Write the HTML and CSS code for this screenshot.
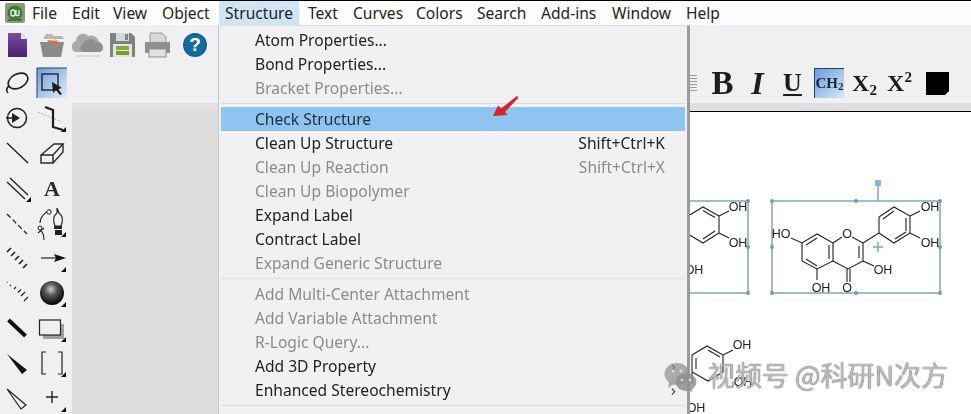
FILE: index.html
```html
<!DOCTYPE html>
<html lang="en">
<head>
<meta charset="utf-8">
<title>ChemDraw - Structure menu</title>
<link rel="stylesheet" href="styles.css">
</head>
<body>
<div class="app">
  <nav class="menubar">
    <svg class="app-icon" width="20" height="20" viewBox="0 0 20 20">
      <rect x="0" y="0" width="20" height="20" rx="2" fill="#8a9a78"/>
      <circle cx="10" cy="10" r="7.5" fill="#3c7a3e"/>
      <path d="M6 9a2 2 0 1 1 4 0v2a2 2 0 1 1-4 0zM11 7v5a2 2 0 0 0 3 0V7" fill="none" stroke="#e8f2e0" stroke-width="1.3"/>
      <rect x="3" y="16" width="14" height="2" fill="#5b6650"/>
    </svg>
    <span class="mi m-file">File</span>
    <span class="mi m-edit">Edit</span>
    <span class="mi m-view">View</span>
    <span class="mi m-object">Object</span>
    <span class="mi m-structure">Structure</span>
    <span class="mi m-text">Text</span>
    <span class="mi m-curves">Curves</span>
    <span class="mi m-colors">Colors</span>
    <span class="mi m-search">Search</span>
    <span class="mi m-addins">Add-ins</span>
    <span class="mi m-window">Window</span>
    <span class="mi m-help">Help</span>
  </nav>

  <div class="iconbar">
    <svg class="tb" width="35" height="41" viewBox="0 0 35 41"><defs><linearGradient id="doc" x1="0" y1="0" x2="0" y2="1"><stop offset="0" stop-color="#7d4f9e"/><stop offset="1" stop-color="#4a2070"/></linearGradient></defs><path d="M8 8h13l6 6v18H8z" fill="url(#doc)"/><path d="M21 8l6 6h-6z" fill="#e9e4ee"/></svg>
    <svg class="tb" width="35" height="41" viewBox="0 0 35 41"><path d="M8 14l3-5h6l2 2h8l2 3z" fill="#b9b6b4"/><path d="M5 17h24l-3 15H8z" fill="#8d8a88"/><path d="M12 15l9 1-2-3 4 4-3 5 1-4c-4 0-7 0-9-3z" fill="#e8683a"/></svg>
    <svg class="tb" width="35" height="41" viewBox="0 0 35 41"><path d="M5 27a6 6 0 0 1 1-11 7 7 0 0 1 12-5 8 8 0 0 1 11 7 5 5 0 0 1 2 9z" fill="#a9a8a8"/><path d="M13 27a5 5 0 0 1 1-9 7 7 0 0 1 12-1 5 5 0 0 1 3 10z" fill="#8f8e8e"/><rect x="6" y="30" width="24" height="2" fill="#dcdcdc"/></svg>
    <svg class="tb" width="35" height="41" viewBox="0 0 35 41"><path d="M5 8h21l4 4v20H5z" fill="#7d8282"/><rect x="11" y="8" width="13" height="8" fill="#d6d8d8"/><rect x="20" y="9" width="3" height="6" fill="#7d8282"/><rect x="8" y="19" width="19" height="13" fill="#e4e6e2"/><rect x="11" y="21" width="13" height="4" fill="#8fa83e"/><rect x="11" y="26" width="13" height="4" fill="#7f9a32"/></svg>
    <svg class="tb" width="35" height="41" viewBox="0 0 35 41"><path d="M10 8h12l4 4v6H10z" fill="#d8d8d8" stroke="#9a9a9a"/><path d="M5 17h25v11H5z" fill="#8e9090"/><rect x="9" y="24" width="17" height="8" fill="#e0e0e0" stroke="#8e9090"/></svg>
    <svg class="tb" width="40" height="41" viewBox="0 0 40 41"><circle cx="20" cy="20" r="12" fill="#146c9e"/><circle cx="20" cy="20" r="11" fill="none" stroke="#0f5c89"/><text class="help-q" x="20" y="26" text-anchor="middle">?</text></svg>
  </div>

  <div class="body">
    <aside class="tools">
      <div class="cell"><svg width="35" height="35" viewBox="0 0 35 35"><ellipse cx="18" cy="15" rx="10.5" ry="7" transform="rotate(-28 18 15)" fill="none" stroke="#222" stroke-width="1.6"/><path d="M10 20c-4 1-4 5-2 7" fill="none" stroke="#222" stroke-width="1.6"/></svg></div>
      <div class="cell"><svg width="35" height="35" viewBox="0 0 35 35"><defs><linearGradient id="sel" x1="0" y1="0" x2="1" y2="1"><stop offset="0" stop-color="#6f9cd4"/><stop offset="1" stop-color="#e4edf6"/></linearGradient></defs><rect x="2" y="2" width="30" height="30" fill="url(#sel)"/><path d="M2 32V2h30" fill="none" stroke="#1d3f7a"/><rect x="7" y="8" width="16" height="16" fill="none" stroke="#16263f" stroke-width="1.4"/><path d="M17 16l1 11 3-3 4 5 2-1-4-5 4-1z" fill="#1a1a22"/></svg></div>

      <div class="cell"><svg width="35" height="35" viewBox="0 0 35 35"><circle cx="17" cy="17" r="9.5" fill="none" stroke="#222" stroke-width="1.5"/><path d="M6 17h7" stroke="#222" stroke-width="1.5"/><path d="M12 12l8 5-8 5z" fill="#222"/></svg></div>
      <div class="cell more"><svg width="35" height="35" viewBox="0 0 35 35"><path d="M3 11l24 10" stroke="#d79aa6" stroke-dasharray="2 1.5"/><path d="M10 6l8 3v17l10 3" fill="none" stroke="#1b1b1b" stroke-width="2.2"/></svg></div>

      <div class="cell"><svg width="35" height="35" viewBox="0 0 35 35"><path d="M7 7l21 20" stroke="#222" stroke-width="1.4"/></svg></div>
      <div class="cell"><svg width="35" height="35" viewBox="0 0 35 35"><path d="M6 19h12v8H6zM6 19L19 8h9L18 19M28 8v8L18 27" fill="none" stroke="#2a2a2a" stroke-width="1.4"/></svg></div>

      <div class="cell more"><svg width="35" height="35" viewBox="0 0 35 35"><path d="M10 7l18 17M7 11l18 17" stroke="#222" stroke-width="1.3"/></svg></div>
      <div class="cell"><svg width="35" height="35" viewBox="0 0 35 35"><text class="tool-a" x="17" y="25" text-anchor="middle">A</text></svg></div>

      <div class="cell"><svg width="35" height="35" viewBox="0 0 35 35"><path d="M7 8l20 20" stroke="#222" stroke-width="1.3" stroke-dasharray="5 3"/></svg></div>
      <div class="cell more"><svg width="35" height="35" viewBox="0 0 35 35"><path d="M5 17c0-6 5-11 11-13M5 24c3 2 4 6 4 10M9 22l-6 5" fill="none" stroke="#222" stroke-width="1.1"/><circle cx="14" cy="6" r="2.2" fill="#f0eff1" stroke="#222"/><circle cx="5" cy="22" r="2" fill="#f0eff1" stroke="#222"/><path d="M22 2v5c-4 3-4 8-2 13h6c2-5 2-10-2-13z" fill="#f0eff1" stroke="#222" stroke-width="1.2"/><rect x="19" y="20" width="8" height="3" fill="#222"/><rect x="20" y="24" width="7" height="5" fill="#222"/></svg></div>

      <div class="cell"><svg width="35" height="35" viewBox="0 0 35 35"><path d="M7 11l4-4M11 15l4-4M15 19l4-4M19 23l4-4M23 27l4-4" stroke="#222" stroke-width="1.7"/></svg></div>
      <div class="cell more"><svg width="35" height="35" viewBox="0 0 35 35"><path d="M6 17h20" stroke="#222" stroke-width="1.2"/><path d="M19 13l12 4-12 4 2-4z" fill="#111"/></svg></div>

      <div class="cell"><svg width="35" height="35" viewBox="0 0 35 35"><path d="M7 6.5l.5-.5M10 10l1-1M14 13l2-2M18 16.500l3-3M21 20l4-4M24 25l4-4" stroke="#222" stroke-width="1.2"/></svg></div>
      <div class="cell more"><svg width="35" height="35" viewBox="0 0 35 35"><defs><radialGradient id="ball" cx="0.45" cy="0.35" r="0.65"><stop offset="0" stop-color="#d0d0d0"/><stop offset="0.4" stop-color="#555"/><stop offset="1" stop-color="#000"/></radialGradient></defs><circle cx="17" cy="17" r="12" fill="url(#ball)"/></svg></div>

      <div class="cell"><svg width="35" height="35" viewBox="0 0 35 35"><path d="M8.500 9l17 16" stroke="#111" stroke-width="4"/></svg></div>
      <div class="cell more"><svg width="35" height="35" viewBox="0 0 35 35"><rect x="8" y="13" width="21" height="15" fill="#a0a0a0"/><rect x="4.500" y="9" width="21" height="15" fill="#f0eff1" stroke="#222" stroke-width="1.2"/></svg></div>

      <div class="cell"><svg width="35" height="35" viewBox="0 0 35 35"><path d="M7 8l20 16-5 4z" fill="#111"/></svg></div>
      <div class="cell more"><svg width="35" height="35" viewBox="0 0 35 35"><path d="M11 6H7v22h4M23 6h4v22h-4" fill="none" stroke="#222" stroke-width="1.2"/></svg></div>

      <div class="cell"><svg width="35" height="35" viewBox="0 0 35 35"><path d="M7 8l19 16-5 4z" fill="none" stroke="#222" stroke-width="1.2"/></svg></div>
      <div class="cell more"><svg width="35" height="35" viewBox="0 0 35 35"><path d="M17 10v12M11 16h12" stroke="#222" stroke-width="1.4"/></svg></div>
    </aside>

    <main class="doc">
      <div class="fmtbar">
        <span class="fmt fmt-lines"><i></i><i></i><i></i><i></i><i></i><i></i></span>
        <span class="fmt fmt-b">B</span>
        <span class="fmt fmt-i">I</span>
        <span class="fmt fmt-u">U</span>
        <span class="fmt fmt-sel">CH<sub>2</sub></span>
        <span class="fmt fmt-x">X<sub>2</sub></span>
        <span class="fmt fmt-x">X<sup>2</sup></span>
        <span class="fmt fmt-sw gap"><span class="swatch"></span></span>
      </div>
      <div class="band"></div>
      <div class="docbody">
        <div class="workspace"></div>
        <div class="canvas">
          <svg class="mol" width="753" height="302" viewBox="218 112 753 302">
            <g class="sel">
              <path d="M690 201h58v92h-58M772 201h168v92H772zM878 186v15"/>
              <rect class="sq" x="875" y="180" width="6" height="6"/>
              <path d="M873 247h10M878 242v10" stroke-width="1.4"/>
            </g>
            <g class="hnd">
              <circle cx="748" cy="201" r="2"/><circle cx="748" cy="247" r="2"/><circle cx="748" cy="293" r="2"/>
              <circle cx="772" cy="201" r="2"/><circle cx="856" cy="201" r="2"/><circle cx="940" cy="201" r="2"/>
              <circle cx="772" cy="247" r="2"/><circle cx="940" cy="247" r="2"/>
              <circle cx="772" cy="293" r="2"/><circle cx="856" cy="293" r="2"/><circle cx="940" cy="293" r="2"/>
            </g>
            <g class="bonds">
              <!-- left molecule fragment -->
              <path d="M688 216l15-9 16 9v17l-16 10-15-9M703 210.500l12 7M715 231l-12 8M719 216l10-5M719 233l10 5"/>
              <!-- right molecule -->
              <path d="M791 238l11 5 15-9 16 9v18l-16 8-15-8v-18M806 245l11-7M806 259l11 7M829 245v14"/>
              <path d="M833 243l9-6M852 237l11 6v18l-15 8-15-8M859 246v12M847 269v13M850 269v13"/>
              <path d="M817 269v11M863 261l11 5M863 243l16-10v-16l15-10 16 9v17l-16 10-15-10M883 219l11-8M906 218v13M895 239l11-7M910 216l10-5M910 233l10 5"/>
              <!-- lower molecule -->
              <path d="M692 355l15-9 16 9v17l-15 9-16-9zM696 358v11M708 350l12 7M723 355l10-5"/>
              <path d="M692 372v12"/>
            </g>
            <g class="atoms">
              <text x="738" y="211">OH</text>
              <text x="738" y="247">OH</text>
              <text x="694" y="274">OH</text>
              <text x="781" y="238">HO</text>
              <text x="847" y="238">O</text>
              <text x="930" y="211">OH</text>
              <text x="930" y="247">OH</text>
              <text x="883" y="274">OH</text>
              <text x="821" y="292">OH</text>
              <text x="847" y="292">O</text>
              <text x="742" y="349">OH</text>
              <text x="743" y="386">OH</text>
              <text x="696" y="412">OH</text>
            </g>
          </svg>
        </div>
      </div>
    </main>
  </div>

  <div class="menu">
    <div class="row">Atom Properties...</div>
    <div class="row">Bond Properties...</div>
    <div class="row off">Bracket Properties...</div>
    <div class="sep"></div>
    <div class="row hot">Check Structure</div>
    <div class="row">Clean Up Structure<span class="key">Shift+Ctrl+K</span></div>
    <div class="row off">Clean Up Reaction<span class="key">Shift+Ctrl+X</span></div>
    <div class="row off">Clean Up Biopolymer</div>
    <div class="row">Expand Label</div>
    <div class="row">Contract Label</div>
    <div class="row off">Expand Generic Structure</div>
    <div class="sep"></div>
    <div class="row off">Add Multi-Center Attachment</div>
    <div class="row off">Add Variable Attachment</div>
    <div class="row off">R-Logic Query...</div>
    <div class="row">Add 3D Property<span class="chev">›</span></div>
    <div class="row">Enhanced Stereochemistry<span class="chev">›</span></div>
    <div class="sep"></div>
    <svg class="pointer" width="30" height="24" viewBox="0 0 30 24"><path d="M1 20l5-10.500 3 3L25 0l1.500 1.500L13 16l2.500 3z" fill="#d5232b"/></svg>
  </div>

  <div class="watermark">
    <svg class="wm-icon" width="33" height="30" viewBox="0 0 33 30"><ellipse cx="13" cy="12" rx="12.500" ry="11" fill="#8f8f8f" fill-opacity=".72"/><path d="M5 20l-1 6 6-4z" fill="#8f8f8f" fill-opacity=".72"/><ellipse cx="22" cy="20" rx="10.500" ry="9" fill="#8f8f8f" fill-opacity=".85"/><path d="M27 26l2 4-6-2z" fill="#8f8f8f" fill-opacity=".85"/><circle cx="9" cy="9" r="1.500" fill="#ddd"/><circle cx="17" cy="9" r="1.500" fill="#ddd"/><circle cx="18" cy="18" r="1.300" fill="#ddd"/><circle cx="26" cy="18" r="1.300" fill="#ddd"/></svg>
    <span class="wm-text">视频号 @科研N次方</span>
  </div>
</div>
</body>
</html>
```

FILE: styles.css
```css
* { box-sizing: border-box; }
html, body { margin: 0; padding: 0; background: #fff; }
.app {
  position: relative;
  width: 971px;
  height: 414px;
  overflow: hidden;
  display: flex;
  flex-direction: column;
  font-family: "Noto Sans", "Open Sans", sans-serif;
  color: #222;
  filter: blur(0.35px);
}

/* menu bar */
.menubar {
  height: 25px;
  flex: none;
  border-top: 1px solid #000;
  background: #fdfdfd;
  display: flex;
  align-items: center;
  font-size: 15.6px;
}
.app-icon { margin-left: 5px; margin-right: 7px; flex: none; }
.mi { display: block; line-height: 24px; white-space: nowrap; }
.m-file { width: 40px; }
.m-edit { width: 41px; }
.m-view { width: 49px; }
.m-object { width: 57px; }
.m-structure { width: 80px; padding-left: 6px; background: #cfe5f6; margin-right: 9px; }
.m-text { width: 45px; }
.m-curves { width: 63px; }
.m-colors { width: 61px; }
.m-search { width: 64px; }
.m-addins { width: 71px; }
.m-window { width: 74px; }

/* top icon row */
.iconbar {
  height: 41px;
  flex: none;
  background: #f0eff1;
  display: flex;
}
.tb { display: block; flex: none; }
.help-q { font: bold 19px "Liberation Sans", sans-serif; fill: #fff; }

/* lower area */
.body { flex: 1; min-height: 0; display: flex; }
.tools {
  width: 72px;
  flex: none;
  background: #f0eff1;
  display: grid;
  grid-template-columns: 35px 35px;
  grid-auto-rows: 35px;
  overflow: hidden;
}
.cell { position: relative; width: 35px; height: 35px; }
.cell svg { display: block; }
.cell.more::after {
  content: "";
  position: absolute;
  right: 4px;
  bottom: 4px;
  width: 5px;
  height: 5px;
  background: #111;
  clip-path: polygon(100% 0, 100% 100%, 0 100%);
}
.tool-a { font: bold 22px "Liberation Serif", serif; fill: #2a2a2a; }

.doc { flex: 1; min-width: 0; display: flex; flex-direction: column; }
.fmtbar {
  height: 37px;
  flex: none;
  background: #f0eff1;
  display: flex;
  justify-content: flex-end;
  align-items: flex-start;
  padding-right: 16px;
}
.fmt {
  display: block;
  width: 35px;
  height: 32px;
  margin-top: 1px;
  text-align: center;
  font-family: "Liberation Serif", serif;
  font-weight: bold;
  color: #1c1c1c;
  line-height: 32px;
  white-space: nowrap;
}
.gap { margin-left: 3px; }
.fmt-b { font-size: 33px; }
.fmt-i { font-size: 32px; font-style: italic; }
.fmt-u { font-size: 26px; text-decoration: underline; text-underline-offset: 3px; text-decoration-thickness: 2px; }
.fmt-x { font-size: 24px; }
.fmt-x sub, .fmt-x sup { font-size: 15px; line-height: 0; }
.fmt-x sub { vertical-align: -4px; }
.fmt-x sup { vertical-align: 9px; }
.fmt-sel {
  width: 30px;
  height: 30px;
  margin-top: 2px;
  margin-left: 4px;
  margin-right: 3px;
  font-size: 15px;
  line-height: 28px;
  color: #13244d;
  background: linear-gradient(135deg, #6e9ddb, #d8e8f2);
  border-left: 1px solid #1d3f7a;
  border-top: 1px solid #1d3f7a;
}
.fmt-sel sub { font-size: 11px; line-height: 0; vertical-align: -2px; }
.fmt-lines {
  display: flex;
  flex-direction: column;
  align-items: flex-end;
  gap: 2px;
  padding-top: 8px;
  padding-right: 8px;
}
.fmt-lines i { display: block; width: 19px; height: 1px; background: #9a9a9a; flex: none; }
.fmt-sw { display: flex; justify-content: center; padding-top: 5px; }
.swatch { position: relative; display: block; width: 23px; height: 23px; background: #000; }
.swatch::after {
  content: "";
  position: absolute;
  right: 0;
  bottom: 0;
  width: 4px;
  height: 4px;
  background: #f0eff1;
  clip-path: polygon(100% 0, 100% 100%, 0 100%);
}
.band { height: 8px; flex: none; background: #e0dfe1; }
.docbody { flex: 1; min-height: 0; display: flex; }
.workspace { width: 146px; flex: none; background: #dddcde; }
.canvas { flex: 1; min-width: 0; background: #fff; border-top: 1px solid #000; }
.mol { display: block; }
.sel path { fill: none; stroke: #7da6bd; stroke-width: 1.5; }
.sel .sq { fill: #8fb3cc; }
.hnd circle { fill: #6f9cb8; }
.bonds path { fill: none; stroke: #222; stroke-width: 1.1; }
.atoms text { font: 12.5px "Liberation Sans", sans-serif; fill: #222; text-anchor: middle; }

/* dropdown */
.menu {
  position: absolute;
  left: 218px;
  top: 25px;
  width: 472px;
  height: 389px;
  padding: 2px 2px 0 2px;
  background: #f1f0f2;
  border-left: 1px solid #c8c8c8;
  border-top: 1px solid #dcdcdc;
  border-right: 3px solid #9c9c9c;
  font-size: 15.6px;
}
.row {
  position: relative;
  height: 24px;
  line-height: 24px;
  padding-left: 34px;
  color: #222;
  white-space: nowrap;
}
.row.off { color: #8b8b8b; }
.row.hot { background: #90c4f0; color: #1f2a40; }
.key { position: absolute; right: 20px; top: 0; }
.chev { position: absolute; right: 9px; top: 0; font-size: 17px; color: #444; }
.sep { height: 7px; padding-top: 3px; }
.sep::after { content: ""; display: block; height: 1px; background: #dcdbdd; }
.pointer { position: absolute; left: 273px; top: 70px; }

/* watermark */
.watermark {
  position: absolute;
  left: 664px;
  top: 358px;
  display: flex;
  align-items: flex-end;
  gap: 11px;
}
.wm-icon { flex: none; margin-bottom: 0; }
.wm-text {
  font-family: "Noto Sans CJK SC", sans-serif;
  font-size: 27px;
  line-height: 34px;
  color: rgba(205, 205, 205, 0.8);
  text-shadow: 0 0 1px #6e6e6e, 0 0 1px #6e6e6e;
  white-space: nowrap;
}
```
